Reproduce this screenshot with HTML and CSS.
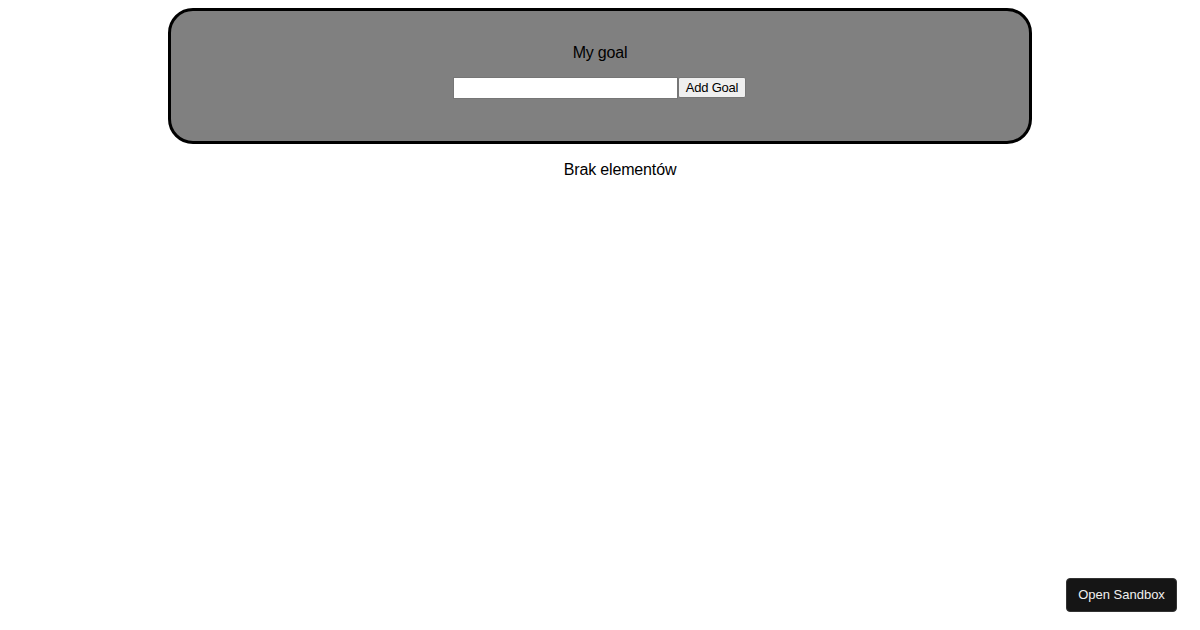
FILE: index.html
```html
<!DOCTYPE html>
<html>
<head>
  <title>Goals</title>
  <link rel="stylesheet" href="styles.css">
</head>
<body>
<div id="goalPane">
  <form class="goal-form">
    <label class="goal-label">My goal</label>
    <div class="goal-row">
      <input type="text" class="goal-input">
      <button type="button" class="goal-add">Add Goal</button>
    </div>
  </form>
</div>
<ul class="goals">
  <li>Brak elementów</li>
</ul>
<a class="sandbox">Open Sandbox</a>
</body>
</html>
```
FILE: styles.css
```css
body {
  margin: 8px;
  font-family: "Liberation Sans", Arial, sans-serif;
  font-size: 16px;
  color: #000;
  background: #fff;
}

#goalPane {
  box-sizing: border-box;
  width: 864px;
  margin: 0 auto;
  background-color: #808080;
  border: 3px solid #000;
  border-radius: 25px;
  padding: 33px 0 42px;
}

.goal-form {
  display: flex;
  flex-direction: column;
  align-items: center;
}

.goal-label {
  display: block;
  line-height: 18px;
  margin-bottom: 15px;
  letter-spacing: -0.2px;
}

.goal-row {
  display: flex;
  align-items: flex-start;
}

.goal-input {
  box-sizing: border-box;
  width: 225px;
  height: 22px;
  margin: 0;
  border: 1px solid #767676;
  background: #fff;
  padding: 1px 2px;
}

.goal-add {
  box-sizing: border-box;
  width: 68px;
  height: 21px;
  margin: 0 1px 0 0;
  padding: 0;
  font-family: "Liberation Sans", Arial, sans-serif;
  font-size: 13px;
  letter-spacing: -0.2px;
  color: #000;
  background: #efefef;
  border: 1px solid #767676;
  border-radius: 2px;
}

.goals {
  list-style: none;
  margin: 17px 0;
  padding-left: 40px;
  text-align: center;
  line-height: 18px;
  letter-spacing: -0.15px;
}

.sandbox {
  position: fixed;
  right: 23px;
  bottom: 18px;
  box-sizing: border-box;
  width: 111px;
  height: 34px;
  line-height: 32px;
  text-align: center;
  background: #151515;
  color: #f0f0f0;
  border-radius: 4px;
  font-family: "Liberation Sans", Arial, sans-serif;
  font-size: 13px;
  border: 1px solid #333;
}
```
